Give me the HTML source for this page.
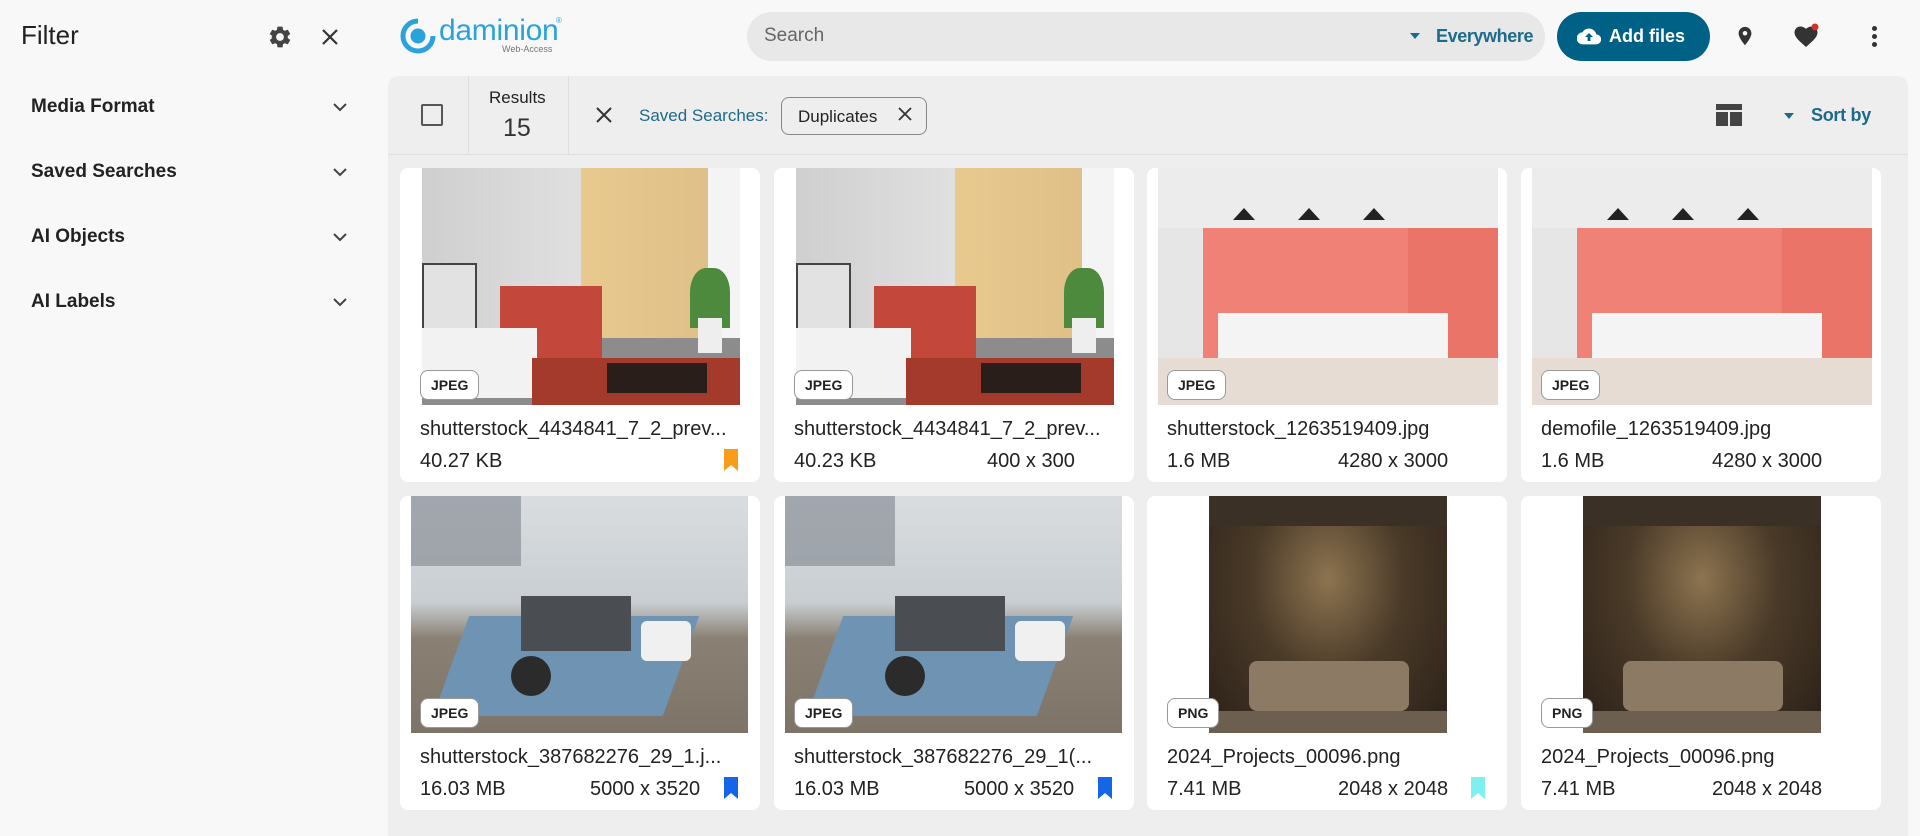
<!DOCTYPE html>
<html><head><meta charset="utf-8"><style>
*{box-sizing:border-box;margin:0;padding:0}
body{width:1920px;height:817px;background:#f8f8f8;font-family:"Liberation Sans",Arial,sans-serif;color:#222;position:relative;overflow:hidden}
.a{position:absolute}
.side{font-size:19px;font-weight:bold;color:#222;left:31px}
.chev{left:332px;width:16px;height:16px}
.panel{left:388px;top:76px;width:1520px;height:760px;background:#eeeeee;border-radius:10px 10px 0 0}
.card{width:360px;height:314px;background:#fff;border-radius:8px;overflow:hidden}
.img{top:0;height:237px;overflow:hidden}
.badge{left:20px;top:202px;background:#fff;border:1px solid #999;border-radius:8px;font-size:14px;font-weight:bold;padding:6px 10px;color:#222}
.fn{left:20px;top:250px;font-size:20px;color:#222;white-space:nowrap}
.sz{left:20px;top:282px;font-size:20px;color:#222}
.dm{top:282px;font-size:20px;color:#222}
.bm{top:281px;width:18px;height:22px}
</style></head><body>
<div class="a" style="left:21px;top:20px;font-size:26px;color:#222">Filter</div>
<svg class="a" style="left:267px;top:24px" width="26" height="26" viewBox="0 0 24 24"><path fill="#444" d="M19.14 12.94c.04-.3.06-.61.06-.94 0-.32-.02-.64-.07-.94l2.030-1.58a.49.49 0 0 0 .12-.61l-1.92-3.32a.49.49 0 0 0-.59-.22l-2.39.96c-.5-.38-1.03-.7-1.62-.94l-.36-2.54a.48.48 0 0 0-.48-.41h-3.84c-.24 0-.43.17-.47.41l-.36 2.54c-.59.24-1.130.57-1.620.94l-2.39-.96a.48.48 0 0 0-.59.22L2.74 8.87c-.12.21-.8.47.12.61l2.03 1.58c-.5.3-.7.63-.7.94s.2.64.7.94l-2.03 1.58a.49.49 0 0 0-.12.61l1.92 3.32c.12.22.37.29.59.22l2.39-.96c.5.38 1.03.7 1.62.94l.36 2.54c.5.24.24.41.48.41h3.84c.24 0 .44-.17.47-.41l.36-2.54c.59-.24 1.13-.56 1.62-.94l2.39.96c.22.08.47 0 .59-.22l1.92-3.32c.12-.22.07-.47-.12-.61l-2.01-1.58zM12 15.6A3.6 3.6 0 1 1 12 8.4a3.6 3.6 0 0 1 0 7.2z"/></svg>
<svg class="a" style="left:320px;top:27px" width="20" height="20" viewBox="0 0 20 20"><path d="M3 3L17 17M17 3L3 17" stroke="#333" stroke-width="2.2"/></svg>
<div class="a side" style="top:96px">Media Format</div>
<div class="a side" style="top:161px">Saved Searches</div>
<div class="a side" style="top:226px">AI Objects</div>
<div class="a side" style="top:291px">AI Labels</div>
<svg class="a chev" style="top:99px" viewBox="0 0 16 16"><path d="M2 5l6 6 6-6" fill="none" stroke="#444" stroke-width="2"/></svg>
<svg class="a chev" style="top:164px" viewBox="0 0 16 16"><path d="M2 5l6 6 6-6" fill="none" stroke="#444" stroke-width="2"/></svg>
<svg class="a chev" style="top:229px" viewBox="0 0 16 16"><path d="M2 5l6 6 6-6" fill="none" stroke="#444" stroke-width="2"/></svg>
<svg class="a chev" style="top:294px" viewBox="0 0 16 16"><path d="M2 5l6 6 6-6" fill="none" stroke="#444" stroke-width="2"/></svg>

<svg class="a" style="left:399px;top:17px" width="38" height="38" viewBox="0 0 38 38"><path d="M19 4a15 15 0 1 0 15 15" fill="none" stroke="#2aa3dd" stroke-width="5"/><circle cx="19" cy="19" r="7.5" fill="#2aa3dd"/></svg>
<div class="a" style="left:439px;top:14px;font-size:30px;color:#2aa3dd;letter-spacing:-0.3px">daminion</div>
<div class="a" style="left:556px;top:16px;font-size:8px;color:#2aa3dd">®</div>
<div class="a" style="left:502px;top:44px;font-size:9px;color:#777">Web-Access</div>

<div class="a" style="left:747px;top:12px;width:798px;height:49px;background:#e8e8e8;border-radius:25px"></div>
<div class="a" style="left:764px;top:25px;font-size:19px;color:#666">Search</div>
<div class="a" style="left:1410px;top:33px;border-left:5px solid transparent;border-right:5px solid transparent;border-top:6px solid #1d6a8a"></div>
<div class="a" style="left:1436px;top:26px;font-size:18px;font-weight:bold;color:#1d6a8a;letter-spacing:-0.4px">Everywhere</div>
<div class="a" style="left:1557px;top:12px;width:153px;height:49px;background:#006186;border-radius:25px"></div>
<svg class="a" style="left:1577px;top:26px" width="24" height="22" viewBox="0 0 24 22"><path fill="#fff" d="M19.3 8.4A7.5 7.5 0 0 0 5.4 6.4 6 6 0 0 0 6 18.4h13a5 5 0 0 0 .3-10z"/><path fill="#006186" d="M12 7l-4 4h2.6v4h2.8v-4H16z"/></svg>
<div class="a" style="left:1609px;top:26px;font-size:18px;font-weight:bold;color:#fff">Add files</div>
<svg class="a" style="left:1734px;top:23px" width="22" height="26" viewBox="0 0 24 24"><path fill="#333" d="M12 2C8.1 2 5 5.1 5 9c0 5.2 7 13 7 13s7-7.8 7-13c0-3.9-3.1-7-7-7zm0 9.5A2.5 2.5 0 1 1 12 6.5a2.5 2.5 0 0 1 0 5z"/></svg>
<svg class="a" style="left:1792px;top:22px" width="28" height="28" viewBox="0 0 28 28"><path fill="#333" d="M14 25l-1.7-1.5C6.2 18 2.5 14.7 2.5 10.5 2.5 7.1 5.1 4.5 8.5 4.5c1.9 0 3.8.9 5.5 2.3 1.7-1.4 3.6-2.3 5.5-2.3 3.4 0 6 2.6 6 6 0 4.2-3.7 7.5-9.8 13z"/><circle cx="23" cy="5" r="3.5" fill="#d32f2f"/></svg>
<div class="a" style="left:1872px;top:26px;width:5px;height:5px;border-radius:50%;background:#333;box-shadow:0 8px 0 #333,0 16px 0 #333"></div>

<div class="a panel"></div>
<div class="a" style="left:388px;top:154px;width:1520px;height:1px;background:#e0e0e0"></div>
<div class="a" style="left:421px;top:104px;width:22px;height:22px;border:2px solid #555;border-radius:2px"></div>
<div class="a" style="left:468px;top:76px;width:1px;height:78px;background:#ddd"></div>
<div class="a" style="left:568px;top:76px;width:1px;height:78px;background:#ddd"></div>
<div class="a" style="left:489px;top:88px;font-size:17px;color:#222">Results</div>
<div class="a" style="left:503px;top:114px;font-size:25px;color:#333">15</div>
<svg class="a" style="left:595px;top:106px" width="18" height="18" viewBox="0 0 18 18"><path d="M2 2L16 16M16 2L2 16" stroke="#333" stroke-width="2"/></svg>
<div class="a" style="left:639px;top:106px;font-size:17px;color:#1d6a8a">Saved Searches:</div>
<div class="a" style="left:781px;top:97px;width:146px;height:38px;border:1px solid #888;border-radius:8px"></div>
<div class="a" style="left:798px;top:107px;font-size:17px;color:#222">Duplicates</div>
<svg class="a" style="left:898px;top:107px" width="14" height="14" viewBox="0 0 14 14"><path d="M1 1L13 13M13 1L1 13" stroke="#333" stroke-width="1.8"/></svg>
<svg class="a" style="left:1716px;top:104px" width="26" height="22" viewBox="0 0 26 22"><rect x="0" y="0" width="26" height="6" fill="#444"/><rect x="0" y="8" width="12" height="14" fill="#444"/><rect x="14" y="8" width="12" height="14" fill="#444"/></svg>
<div class="a" style="left:1784px;top:113px;border-left:5px solid transparent;border-right:5px solid transparent;border-top:6px solid #1d6a8a"></div>
<div class="a" style="left:1811px;top:105px;font-size:18px;font-weight:bold;color:#1d6a8a;letter-spacing:-0.3px">Sort by</div>

<!-- Row 1 -->
<div class="a card" style="left:400px;top:168px">
 <div class="a img" style="left:22px;width:318px;background:linear-gradient(90deg,#cfcfcf 0,#e0e0e0 50%,#e8c98e 50%,#dfc088 90%,#f4f4f4 90%)">
  <div class="a" style="left:0;top:170px;width:318px;height:67px;background:#8c8c8c"></div>
  <div class="a" style="left:0;top:95px;width:55px;height:80px;background:#e2e2e2;border:2px solid #444"></div>
  <div class="a" style="left:78px;top:118px;width:102px;height:72px;background:#c3473a"></div>
  <div class="a" style="left:0;top:160px;width:115px;height:70px;background:#f2f2f2"></div>
  <div class="a" style="left:110px;top:190px;width:208px;height:47px;background:#a43a2b"></div>
  <div class="a" style="left:185px;top:195px;width:100px;height:30px;background:#2a1e1a"></div>
  <div class="a" style="left:268px;top:100px;width:40px;height:60px;background:#4d8a3e;border-radius:40% 40% 0 0"></div>
  <div class="a" style="left:276px;top:150px;width:24px;height:35px;background:#eee"></div>
 </div>
 <div class="a badge">JPEG</div>
 <div class="a fn">shutterstock_4434841_7_2_prev...</div>
 <div class="a sz">40.27 KB</div>
 <svg class="a bm" style="left:322px" viewBox="0 0 18 22"><path d="M2 0h14v22l-7-6-7 6z" fill="#f89c1c"/></svg>
</div>
<div class="a card" style="left:774px;top:168px">
 <div class="a img" style="left:22px;width:318px;background:linear-gradient(90deg,#cfcfcf 0,#e0e0e0 50%,#e8c98e 50%,#dfc088 90%,#f4f4f4 90%)">
  <div class="a" style="left:0;top:170px;width:318px;height:67px;background:#8c8c8c"></div>
  <div class="a" style="left:0;top:95px;width:55px;height:80px;background:#e2e2e2;border:2px solid #444"></div>
  <div class="a" style="left:78px;top:118px;width:102px;height:72px;background:#c3473a"></div>
  <div class="a" style="left:0;top:160px;width:115px;height:70px;background:#f2f2f2"></div>
  <div class="a" style="left:110px;top:190px;width:208px;height:47px;background:#a43a2b"></div>
  <div class="a" style="left:185px;top:195px;width:100px;height:30px;background:#2a1e1a"></div>
  <div class="a" style="left:268px;top:100px;width:40px;height:60px;background:#4d8a3e;border-radius:40% 40% 0 0"></div>
  <div class="a" style="left:276px;top:150px;width:24px;height:35px;background:#eee"></div>
 </div>
 <div class="a badge">JPEG</div>
 <div class="a fn">shutterstock_4434841_7_2_prev...</div>
 <div class="a sz">40.23 KB</div>
 <div class="a dm" style="left:213px">400 x 300</div>
</div>
<div class="a card" style="left:1147px;top:168px">
 <div class="a img" style="left:11px;width:340px;background:#f08176">
  <div class="a" style="left:0;top:0;width:340px;height:60px;background:#ececec"></div>
  <div class="a" style="left:0;top:60px;width:45px;height:130px;background:#e6e6e6"></div>
  <div class="a" style="left:250px;top:60px;width:90px;height:130px;background:#ea7468"></div>
  <div class="a" style="left:60px;top:145px;width:230px;height:50px;background:#f4f4f4"></div>
  <div class="a" style="left:0;top:190px;width:340px;height:47px;background:#e6dcd3"></div>
  <div class="a" style="left:75px;top:40px;width:22px;height:12px;background:#222;clip-path:polygon(50% 0,100% 100%,0 100%)"></div>
  <div class="a" style="left:140px;top:40px;width:22px;height:12px;background:#222;clip-path:polygon(50% 0,100% 100%,0 100%)"></div>
  <div class="a" style="left:205px;top:40px;width:22px;height:12px;background:#222;clip-path:polygon(50% 0,100% 100%,0 100%)"></div>
 </div>
 <div class="a badge">JPEG</div>
 <div class="a fn">shutterstock_1263519409.jpg</div>
 <div class="a sz">1.6 MB</div>
 <div class="a dm" style="left:191px">4280 x 3000</div>
</div>
<div class="a card" style="left:1521px;top:168px">
 <div class="a img" style="left:11px;width:340px;background:#f08176">
  <div class="a" style="left:0;top:0;width:340px;height:60px;background:#ececec"></div>
  <div class="a" style="left:0;top:60px;width:45px;height:130px;background:#e6e6e6"></div>
  <div class="a" style="left:250px;top:60px;width:90px;height:130px;background:#ea7468"></div>
  <div class="a" style="left:60px;top:145px;width:230px;height:50px;background:#f4f4f4"></div>
  <div class="a" style="left:0;top:190px;width:340px;height:47px;background:#e6dcd3"></div>
  <div class="a" style="left:75px;top:40px;width:22px;height:12px;background:#222;clip-path:polygon(50% 0,100% 100%,0 100%)"></div>
  <div class="a" style="left:140px;top:40px;width:22px;height:12px;background:#222;clip-path:polygon(50% 0,100% 100%,0 100%)"></div>
  <div class="a" style="left:205px;top:40px;width:22px;height:12px;background:#222;clip-path:polygon(50% 0,100% 100%,0 100%)"></div>
 </div>
 <div class="a badge">JPEG</div>
 <div class="a fn">demofile_1263519409.jpg</div>
 <div class="a sz">1.6 MB</div>
 <div class="a dm" style="left:191px">4280 x 3000</div>
</div>

<!-- Row 2 -->
<div class="a card" style="left:400px;top:496px">
 <div class="a img" style="left:11px;width:337px;background:linear-gradient(180deg,#d9dde0 0,#c9ced2 45%,#8a8174 60%,#7d7467 100%)">
  <div class="a" style="left:0;top:0;width:110px;height:70px;background:#8a9098;opacity:.7"></div>
  <div class="a" style="left:40px;top:120px;width:230px;height:100px;background:#6f93b3;transform:skewX(-20deg)"></div>
  <div class="a" style="left:110px;top:100px;width:110px;height:55px;background:#4a4d52"></div>
  <div class="a" style="left:230px;top:125px;width:50px;height:40px;background:#f0f0f0;border-radius:6px"></div>
  <div class="a" style="left:100px;top:160px;width:40px;height:40px;background:#2b2b2b;border-radius:50%"></div>
 </div>
 <div class="a badge">JPEG</div>
 <div class="a fn">shutterstock_387682276_29_1.j...</div>
 <div class="a sz">16.03 MB</div>
 <div class="a dm" style="left:190px">5000 x 3520</div>
 <svg class="a bm" style="left:322px" viewBox="0 0 18 22"><path d="M2 0h14v22l-7-6-7 6z" fill="#1565e8"/></svg>
</div>
<div class="a card" style="left:774px;top:496px">
 <div class="a img" style="left:11px;width:337px;background:linear-gradient(180deg,#d9dde0 0,#c9ced2 45%,#8a8174 60%,#7d7467 100%)">
  <div class="a" style="left:0;top:0;width:110px;height:70px;background:#8a9098;opacity:.7"></div>
  <div class="a" style="left:40px;top:120px;width:230px;height:100px;background:#6f93b3;transform:skewX(-20deg)"></div>
  <div class="a" style="left:110px;top:100px;width:110px;height:55px;background:#4a4d52"></div>
  <div class="a" style="left:230px;top:125px;width:50px;height:40px;background:#f0f0f0;border-radius:6px"></div>
  <div class="a" style="left:100px;top:160px;width:40px;height:40px;background:#2b2b2b;border-radius:50%"></div>
 </div>
 <div class="a badge">JPEG</div>
 <div class="a fn">shutterstock_387682276_29_1(...</div>
 <div class="a sz">16.03 MB</div>
 <div class="a dm" style="left:190px">5000 x 3520</div>
 <svg class="a bm" style="left:322px" viewBox="0 0 18 22"><path d="M2 0h14v22l-7-6-7 6z" fill="#1565e8"/></svg>
</div>
<div class="a card" style="left:1147px;top:496px">
 <div class="a img" style="left:62px;width:238px;background:radial-gradient(ellipse at 50% 35%,#8d7450 0,#4a3a28 45%,#2a2018 100%)">
  <div class="a" style="left:0;top:0;width:238px;height:30px;background:#3a3026"></div>
  <div class="a" style="left:40px;top:165px;width:160px;height:50px;background:#8c7a64;border-radius:8px"></div>
  <div class="a" style="left:0;top:215px;width:238px;height:22px;background:#6d5f50"></div>
 </div>
 <div class="a badge">PNG</div>
 <div class="a fn">2024_Projects_00096.png</div>
 <div class="a sz">7.41 MB</div>
 <div class="a dm" style="left:191px">2048 x 2048</div>
 <svg class="a bm" style="left:322px" viewBox="0 0 18 22"><path d="M2 0h14v22l-7-6-7 6z" fill="#7ff0f0"/></svg>
</div>
<div class="a card" style="left:1521px;top:496px">
 <div class="a img" style="left:62px;width:238px;background:radial-gradient(ellipse at 50% 35%,#8d7450 0,#4a3a28 45%,#2a2018 100%)">
  <div class="a" style="left:0;top:0;width:238px;height:30px;background:#3a3026"></div>
  <div class="a" style="left:40px;top:165px;width:160px;height:50px;background:#8c7a64;border-radius:8px"></div>
  <div class="a" style="left:0;top:215px;width:238px;height:22px;background:#6d5f50"></div>
 </div>
 <div class="a badge">PNG</div>
 <div class="a fn">2024_Projects_00096.png</div>
 <div class="a sz">7.41 MB</div>
 <div class="a dm" style="left:191px">2048 x 2048</div>
</div>
</body></html>
